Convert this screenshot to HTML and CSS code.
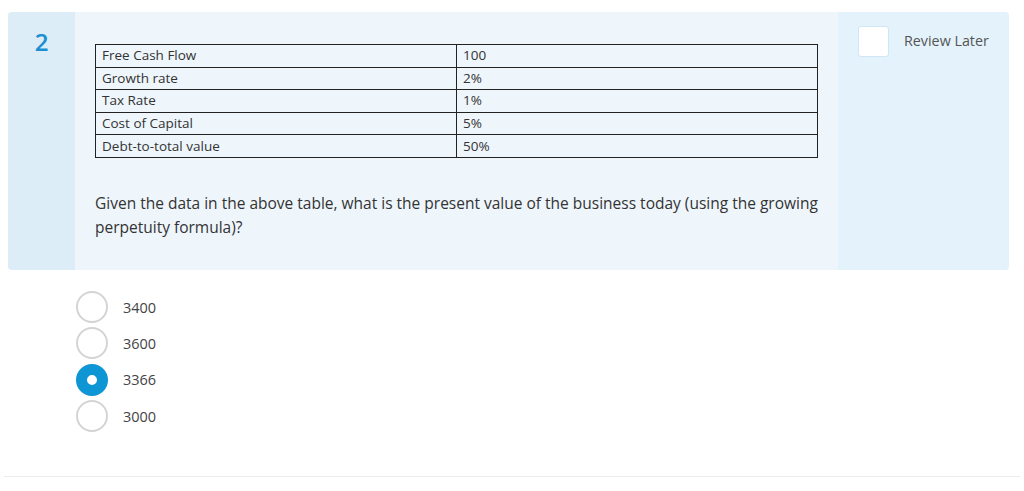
FILE: index.html
```html
<!DOCTYPE html>
<html lang="en">
<head>
<meta charset="utf-8">
<title>Question 2</title>
<link rel="stylesheet" href="styles.css">
</head>
<body>
<div class="card">
  <div class="num-col"><span class="qnum">2</span></div>
  <div class="content">
    <table class="data">
      <tr><td>Free Cash Flow</td><td>100</td></tr>
      <tr><td>Growth rate</td><td>2%</td></tr>
      <tr><td>Tax Rate</td><td>1%</td></tr>
      <tr><td>Cost of Capital</td><td>5%</td></tr>
      <tr><td>Debt-to-total value</td><td>50%</td></tr>
    </table>
    <p class="question">Given the data in the above table, what is the present value of the business today (using the growing perpetuity formula)?</p>
  </div>
  <div class="side">
    <span class="checkbox"></span>
    <span class="review">Review Later</span>
  </div>
</div>
<ul class="options">
  <li class="option"><span class="radio"></span><span class="label">3400</span></li>
  <li class="option"><span class="radio"></span><span class="label">3600</span></li>
  <li class="option"><span class="radio checked"></span><span class="label">3366</span></li>
  <li class="option"><span class="radio"></span><span class="label">3000</span></li>
</ul>
<div class="divider"></div>
</body>
</html>
```

FILE: styles.css
```css
html, body {
  margin: 0;
  padding: 0;
  background: #ffffff;
  font-family: "Open Sans", "Noto Sans", sans-serif;
  color: #333;
}
.card {
  display: flex;
  margin: 12px 15px 0 8px;
  height: 258px;
  border-radius: 4px;
  overflow: hidden;
  background: #eef6fc;
}
.num-col {
  width: 67px;
  flex: none;
  background: #dcedf8;
  display: flex;
  justify-content: center;
  align-items: flex-start;
  padding-top: 14px;
  box-sizing: border-box;
}
.qnum {
  font-size: 24px;
  font-weight: 600;
  line-height: 32px;
  color: #1a8fd1;
}
.content {
  width: 763px;
  flex: none;
  box-sizing: border-box;
  padding: 32px 20px 0 20px;
  background: #eef6fc;
}
.data {
  width: 723px;
  border-collapse: collapse;
  border: 1px solid #666;
  font-size: 13.5px;
  color: #333;
}
.data td {
  border: 1px solid #222;
  height: 22.6px;
  padding: 0 0 0 6px;
  line-height: 21px;
  box-sizing: border-box;
}
.data td:first-child {
  width: 361px;
}
.question {
  margin: 33px 0 0 0;
  font-size: 15.5px;
  line-height: 24px;
  color: #333;
}
.side {
  flex: 1;
  background: #e4f2fb;
  display: flex;
  align-items: flex-start;
  padding: 14px 0 0 20px;
}
.checkbox {
  width: 31px;
  height: 31px;
  box-sizing: border-box;
  background: #fff;
  border: 1px solid #cfe6f5;
  border-radius: 3px;
  flex: none;
}
.review {
  margin-left: 15px;
  font-size: 14.3px;
  line-height: 31px;
  margin-top: -1px;
  color: #555;
}
.options {
  list-style: none;
  margin: 19px 0 0 76px;
  padding: 0;
}
.option {
  display: flex;
  align-items: center;
  height: 36.3px;
}
.radio {
  width: 32px;
  height: 32px;
  box-sizing: border-box;
  border: 2px solid #d4d4d4;
  border-radius: 50%;
  background: #fff;
  flex: none;
}
.radio.checked {
  border: 11px solid #0e95d3;
  background: #fff;
}
.label {
  margin-left: 15px;
  font-size: 14.5px;
  color: #444;
}
.divider {
  margin: 42px 4px 0 4px;
  height: 1px;
  background: #ececec;
}
```
